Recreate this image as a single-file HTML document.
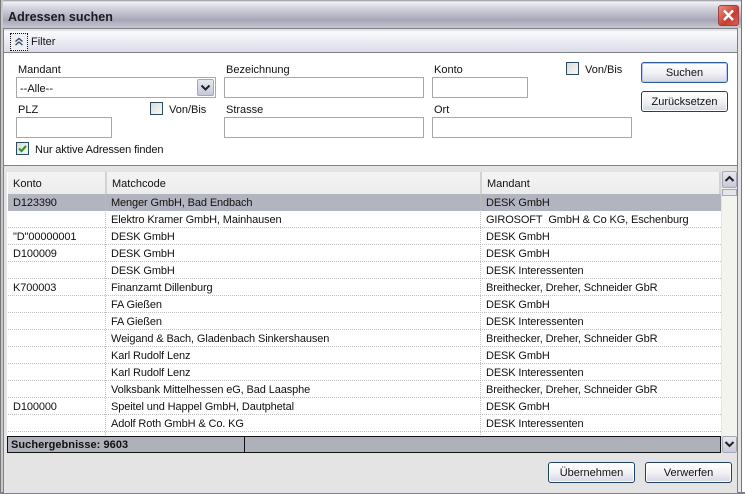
<!DOCTYPE html>
<html><head><meta charset="utf-8">
<style>
html,body{margin:0;padding:0;width:745px;height:494px;overflow:hidden;background:#fff}
*{box-sizing:border-box}
body{font:11px "Liberation Sans",sans-serif;color:#111;position:relative}
div,span.a{position:absolute}
.t{white-space:nowrap;line-height:14px}
.inp{background:#fff;border:1px solid #a8a8a8}
.cb{width:13px;height:13px;border:1px solid #2c4a60;background:linear-gradient(135deg,#dcdcd6,#f8f8f6)}
.btn{border:1px solid #1f3f63;border-radius:3px;background:linear-gradient(#fff,#f2f2f6 50%,#d4d6e4);text-align:center;line-height:21px;box-shadow:inset 0 0 0 1px #fff}
.row{left:8px;width:713px;height:17px;border-bottom:1px dotted #c0c0c0}
.c{top:2px;line-height:15px;white-space:nowrap;letter-spacing:-.12px}
.c1{left:5px}.c2{left:103px}.c3{left:478px}
.v1{left:105px;top:194px;width:0;height:241px;border-left:1px dotted #c0c0c0}
.v2{left:480px;top:194px;width:0;height:241px;border-left:1px dotted #c0c0c0}
.hd{top:172px;height:22px;background:linear-gradient(#f4f4f4,#ececec);border-right:2px solid #d2d2d2;line-height:24px;padding-left:5px;white-space:nowrap}
</style></head><body>
<div style="left:0;top:0;width:745px;height:494px;background:#e4e4e4"></div>
<div style="left:0;top:0;width:745px;height:28px;background:linear-gradient(#8f8f9f 0,#f0f0f4 2px,#d8d8e2 7px,#a6a6b8 20px,#c4c4cc 27px)"></div>
<div style="left:0;top:0;width:3px;height:494px;background:#c8c8cc;border-left:1px solid #777"></div>
<div style="left:741px;top:0;width:4px;height:494px;background:#fff;border-left:1px solid #777"></div>
<div style="left:0;top:492px;width:745px;height:2px;background:#808088"></div>
<div style="left:3px;top:28px;width:735px;height:465px;border:1px solid #808088;border-bottom:0;background:#e4e4e4"></div>
<div class="t" style="left:8px;top:10px;font-size:12.5px;font-weight:bold;letter-spacing:.05px;color:#1a1a22">Adressen suchen</div>
<div style="left:718px;top:5px;width:21px;height:21px;border:1px solid #a04040;border-radius:3px;background:linear-gradient(135deg,#e89080,#c83c30 60%,#d86050)">
<svg width="19" height="19" style="position:absolute;left:0;top:0"><path d="M5 4.5L14 14M14 4.5L5 14" stroke="#fff" stroke-width="2.4" fill="none"/></svg></div>

<div style="left:4px;top:31px;width:733px;height:22px;background:linear-gradient(#fafafe,#dcdce8);border-bottom:1px solid #808088"></div>
<div style="left:4px;top:53px;width:733px;height:113px;background:#fff;border-bottom:1px solid #808088"></div>
<div style="left:10px;top:33px;width:18px;height:18px;border:1px dotted #111;background:#eef0f4">
<svg width="16" height="16" style="position:absolute;left:0;top:0"><path d="M4.5 7.5L8 4.5L11.5 7.5M4.5 11L8 8L11.5 11" stroke="#3a4a60" stroke-width="1.4" fill="none"/></svg></div>
<div class="t" style="left:31px;top:35px">Filter</div>

<div class="t" style="left:18px;top:63px">Mandant</div>
<div class="inp" style="left:16px;top:77px;width:200px;height:21px"></div>
<div class="t" style="left:20px;top:82px">--Alle--</div>
<div style="left:197px;top:79px;width:17px;height:17px;border:1px solid #a8a8b4;border-radius:2px;background:linear-gradient(#e8e8f0,#c4c8d8)">
<svg width="15" height="15" style="position:absolute;left:0;top:0"><path d="M3.5 5.5L7.5 9.5L11.5 5.5" stroke="#222" stroke-width="2" fill="none"/></svg></div>

<div class="t" style="left:226px;top:63px">Bezeichnung</div>
<div class="inp" style="left:224px;top:77px;width:200px;height:21px"></div>
<div class="t" style="left:434px;top:63px">Konto</div>
<div class="inp" style="left:432px;top:77px;width:96px;height:21px"></div>
<div class="cb" style="left:566px;top:62px"></div>
<div class="t" style="left:585px;top:63px">Von/Bis</div>
<div class="btn" style="left:641px;top:62px;width:87px;height:21px;border-color:#2a5c9c;box-shadow:inset 0 0 0 1px #b8c8f0">Suchen</div>
<div class="btn" style="left:641px;top:91px;width:87px;height:21px">Zurücksetzen</div>

<div class="t" style="left:18px;top:103px">PLZ</div>
<div class="inp" style="left:16px;top:117px;width:96px;height:21px"></div>
<div class="cb" style="left:150px;top:102px"></div>
<div class="t" style="left:169px;top:103px">Von/Bis</div>
<div class="t" style="left:226px;top:103px">Strasse</div>
<div class="inp" style="left:224px;top:117px;width:200px;height:21px"></div>
<div class="t" style="left:434px;top:103px">Ort</div>
<div class="inp" style="left:432px;top:117px;width:200px;height:21px"></div>
<div class="cb" style="left:16px;top:142px">
<svg width="11" height="11" style="position:absolute;left:0;top:0"><path d="M2 5.5L4.5 8L9 3" stroke="#2f9a34" stroke-width="2.2" fill="none"/></svg></div>
<div class="t" style="left:35px;top:143px;letter-spacing:-.12px">Nur aktive Adressen finden</div>

<div style="left:7px;top:171px;width:714px;height:265px;background:#fff"></div>
<div class="hd" style="left:8px;width:99px">Konto</div>
<div class="hd" style="left:107px;width:375px">Matchcode</div>
<div class="hd" style="left:482px;width:239px">Mandant</div>

<div class="row" style="top:194px;background:#b2b4c0;border-bottom:0"><span class="a c c1">D123390</span><span class="a c c2">Menger GmbH, Bad Endbach</span><span class="a c c3">DESK GmbH</span></div>
<div class="row" style="top:211px"><span class="a c c2">Elektro Kramer GmbH, Mainhausen</span><span class="a c c3">GIROSOFT&nbsp; GmbH &amp; Co KG, Eschenburg</span></div>
<div class="row" style="top:228px"><span class="a c c1">"D"00000001</span><span class="a c c2">DESK GmbH</span><span class="a c c3">DESK GmbH</span></div>
<div class="row" style="top:245px"><span class="a c c1">D100009</span><span class="a c c2">DESK GmbH</span><span class="a c c3">DESK GmbH</span></div>
<div class="row" style="top:262px"><span class="a c c2">DESK GmbH</span><span class="a c c3">DESK Interessenten</span></div>
<div class="row" style="top:279px"><span class="a c c1">K700003</span><span class="a c c2">Finanzamt Dillenburg</span><span class="a c c3">Breithecker, Dreher, Schneider GbR</span></div>
<div class="row" style="top:296px"><span class="a c c2">FA Gießen</span><span class="a c c3">DESK GmbH</span></div>
<div class="row" style="top:313px"><span class="a c c2">FA Gießen</span><span class="a c c3">DESK Interessenten</span></div>
<div class="row" style="top:330px"><span class="a c c2">Weigand &amp; Bach, Gladenbach Sinkershausen</span><span class="a c c3">Breithecker, Dreher, Schneider GbR</span></div>
<div class="row" style="top:347px"><span class="a c c2">Karl Rudolf Lenz</span><span class="a c c3">DESK GmbH</span></div>
<div class="row" style="top:364px"><span class="a c c2">Karl Rudolf Lenz</span><span class="a c c3">DESK Interessenten</span></div>
<div class="row" style="top:381px"><span class="a c c2">Volksbank Mittelhessen eG, Bad Laasphe</span><span class="a c c3">Breithecker, Dreher, Schneider GbR</span></div>
<div class="row" style="top:398px"><span class="a c c1">D100000</span><span class="a c c2">Speitel und Happel GmbH, Dautphetal</span><span class="a c c3">DESK GmbH</span></div>
<div class="row" style="top:415px"><span class="a c c2">Adolf Roth GmbH &amp; Co. KG</span><span class="a c c3">DESK Interessenten</span></div>
<div class="v1"></div><div class="v2"></div>
<div style="left:7px;top:171px;width:714px;height:1px;background:#e0e0e0"></div>

<div style="left:7px;top:436px;width:714px;height:17px;background:#aeb0ba;border:1px solid #111"></div>
<div style="left:244px;top:436px;width:1px;height:17px;background:#111"></div>
<div class="t" style="left:11px;top:438px;font-weight:bold;letter-spacing:.05px">Suchergebnisse: 9603</div>

<div style="left:722px;top:171px;width:15px;height:282px;background:#f4f4ee"></div>
<div style="left:722px;top:171px;width:15px;height:17px;border:1px solid #a8a8b4;border-radius:2px;background:linear-gradient(#e8e8f0,#c8cad8)">
<svg width="13" height="15" style="position:absolute;left:0;top:0"><path d="M2.5 9L6.5 5L10.5 9" stroke="#222" stroke-width="2" fill="none"/></svg></div>
<div style="left:722px;top:189px;width:15px;height:7px;border:1px solid #a8a8b4;background:#e4e6ee"></div>
<div style="left:722px;top:436px;width:15px;height:17px;border:1px solid #a8a8b4;border-radius:2px;background:linear-gradient(#e8e8f0,#c8cad8)">
<svg width="13" height="15" style="position:absolute;left:0;top:0"><path d="M2.5 5L6.5 9L10.5 5" stroke="#222" stroke-width="2" fill="none"/></svg></div>

<div class="btn" style="left:548px;top:462px;width:87px;height:21px">Übernehmen</div>
<div class="btn" style="left:645px;top:462px;width:87px;height:21px">Verwerfen</div>
</body></html>
